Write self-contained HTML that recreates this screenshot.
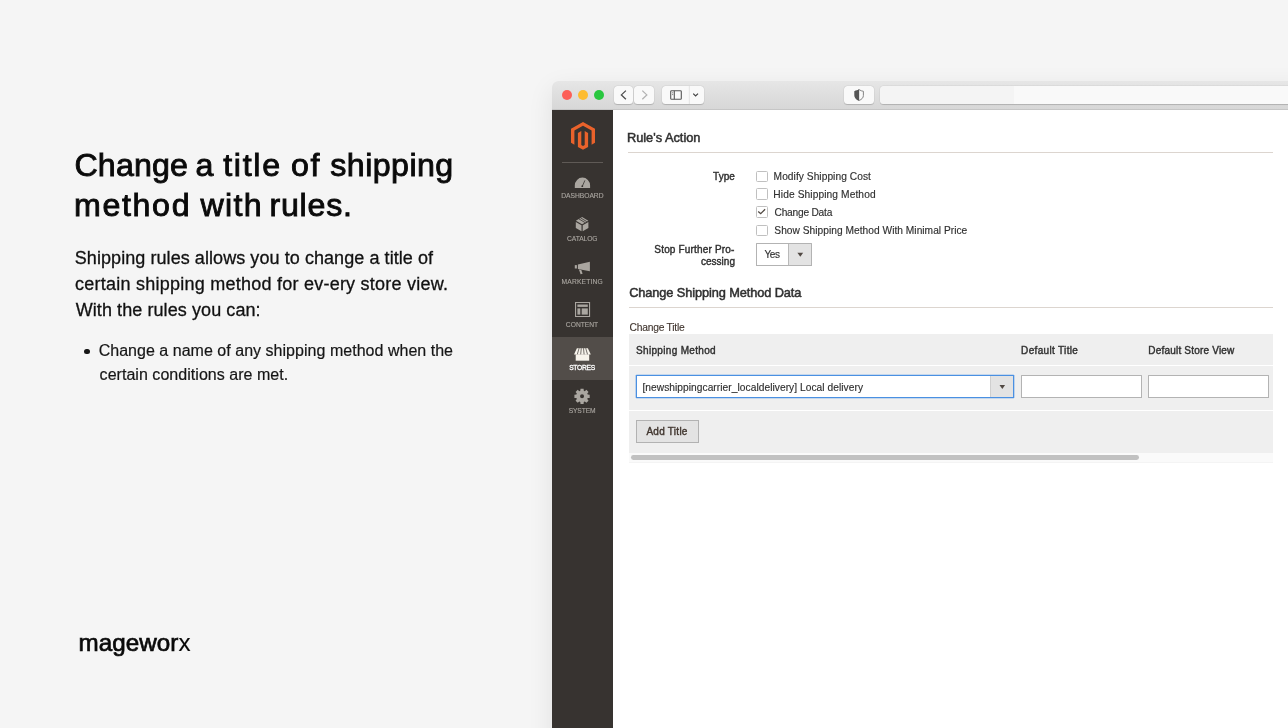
<!DOCTYPE html>
<html lang="en">
<head>
<meta charset="utf-8">
<title>Change a title of shipping method with rules</title>
<style>
*{box-sizing:border-box;margin:0;padding:0}
html,body{width:1288px;height:728px;overflow:hidden;background:#f5f5f5}
body{position:relative;font-family:"Liberation Sans",Arial,sans-serif;color:#111}
.t{position:absolute;white-space:pre;font-weight:400;font-family:"Liberation Sans",Arial,sans-serif}
.a{position:absolute}
.stage{position:absolute;left:0;top:0;width:1288px;height:728px;overflow:hidden;will-change:transform}
.dot{position:absolute;left:84.4px;top:348.5px;width:5.6px;height:5.6px;border-radius:50%;background:#161616}
/* browser window */
.win{position:absolute;left:552px;top:81px;width:760px;height:680px;border-radius:6px 0 0 0;background:#fff;box-shadow:0 8px 26px rgba(0,0,0,.085)}
.clip{position:absolute;left:0;top:0;width:100%;height:100%;border-radius:6px 0 0 0;overflow:hidden}
.tbar{position:absolute;left:0;top:0;width:100%;height:29px;background:linear-gradient(#e6e6e6,#d7d7d7);border-bottom:1px solid #c6c6c6}
.tl{position:absolute;top:9px;width:10px;height:10px;border-radius:50%}
.btn{position:absolute;top:5px;height:18.2px;background:#f9f9f9;border-radius:3.5px;box-shadow:0 .5px .8px rgba(0,0,0,.16),0 0 0 .5px rgba(0,0,0,.05)}
.side{position:absolute;left:0;top:29px;width:61px;height:700px;background:#373330}
.act{position:absolute;left:0;top:227px;width:61px;height:43px;background:#524d49}
.main{position:absolute;left:61px;top:29px;right:0;bottom:0;background:#fff}
.hr{position:absolute;height:1px;background:#dcd5cf}
.cb{position:absolute;width:11.5px;height:11.5px;border:1px solid #c0c0c0;border-radius:1.5px;background:#fff}
.inp{position:absolute;height:23px;border:1px solid #b3b3b3;background:#fff;border-radius:.5px}
</style>
</head>
<body>
<div class="stage">
<h1><span class="t" style="left:74.5px;top:149.0px;font-size:32.2px;line-height:32.2px;color:#0a0a0a;letter-spacing:0.12px;-webkit-text-stroke:0.9px #0a0a0a;">Change</span> <span class="t" style="left:195.6px;top:149.0px;font-size:32.2px;line-height:32.2px;color:#0a0a0a;-webkit-text-stroke:0.9px #0a0a0a;">a</span> <span class="t" style="left:223.2px;top:149.0px;font-size:32.2px;line-height:32.2px;color:#0a0a0a;letter-spacing:1.7px;-webkit-text-stroke:0.9px #0a0a0a;">title</span> <span class="t" style="left:290.9px;top:149.0px;font-size:32.2px;line-height:32.2px;color:#0a0a0a;letter-spacing:1.7px;-webkit-text-stroke:0.9px #0a0a0a;">of</span> <span class="t" style="left:330.3px;top:149.0px;font-size:32.2px;line-height:32.2px;color:#0a0a0a;letter-spacing:0.429px;-webkit-text-stroke:0.9px #0a0a0a;">shipping</span> <span class="t" style="left:74.0px;top:189.0px;font-size:32.2px;line-height:32.2px;color:#0a0a0a;letter-spacing:1.64px;-webkit-text-stroke:0.9px #0a0a0a;">method</span> <span class="t" style="left:200.5px;top:189.0px;font-size:32.2px;line-height:32.2px;color:#0a0a0a;letter-spacing:1.267px;-webkit-text-stroke:0.9px #0a0a0a;">with</span> <span class="t" style="left:269.45px;top:189.0px;font-size:32.2px;line-height:32.2px;color:#0a0a0a;letter-spacing:0.76px;-webkit-text-stroke:0.9px #0a0a0a;">rules.</span></h1>
<p><span class="t" style="left:74.75px;top:249.0px;font-size:18px;line-height:18px;color:#111;letter-spacing:0.069px;-webkit-text-stroke:0.3px #111;">Shipping rules allows you to change a title of</span> <span class="t" style="left:74.95px;top:275.0px;font-size:18px;line-height:18px;color:#111;letter-spacing:0.244px;-webkit-text-stroke:0.3px #111;">certain shipping method for ev-ery store view.</span> <span class="t" style="left:75.65px;top:301.0px;font-size:18px;line-height:18px;color:#111;letter-spacing:0.086px;-webkit-text-stroke:0.3px #111;">With the rules you can:</span></p>
<ul style="list-style:none"><li><span class="dot"></span><span class="t" style="left:98.7px;top:343.0px;font-size:16px;line-height:16px;color:#161616;letter-spacing:0.027px;-webkit-text-stroke:0.2px #161616;">Change a name of any shipping method when the</span> <span class="t" style="left:99.6px;top:367.0px;font-size:16px;line-height:16px;color:#161616;letter-spacing:0.038px;-webkit-text-stroke:0.2px #161616;">certain conditions are met.</span></li></ul>
<div class="t" style="left:78.4px;top:631.0px;font-size:24.2px;line-height:24.2px;color:#0a0a0a;letter-spacing:0.086px;-webkit-text-stroke:0.7px #0a0a0a;">magewor<span style="-webkit-text-stroke:0.1px #0a0a0a">x</span></div>

<div class="win"><div class="clip">
  <div class="tbar">
    <span class="tl" style="left:10px;background:#fc5f58"></span>
    <span class="tl" style="left:26px;background:#fdbc30"></span>
    <span class="tl" style="left:42px;background:#29c73f"></span>
    <span class="btn" style="left:62px;width:19.3px"></span>
    <span class="btn" style="left:82.2px;width:19.8px"></span>
    <span class="btn" style="left:110px;width:42px"></span>
    <span class="btn" style="left:291.7px;width:30.5px"></span>
    <span class="btn" style="left:328px;width:440px;background:linear-gradient(to right,#f4f4f4 0,#f4f4f4 134px,#f9f9f9 134px)"></span>
    <svg class="a" style="left:0;top:0" width="340" height="29" viewBox="0 0 340 29" fill="none">
      <path d="M73.900 9.600 L69.400 13.900 L73.900 18.200" stroke="#4d4d4d" stroke-width="1.300"/>
      <path d="M90.300 9.600 L94.800 13.900 L90.300 18.200" stroke="#b2b2b2" stroke-width="1.300"/>
      <rect x="118.700" y="9.700" width="10.600" height="8.600" rx=".9" stroke="#555" stroke-width="1.100"/>
      <path d="M122.300 9.700 V18.300" stroke="#555" stroke-width="1.100"/>
      <path d="M120 11.800h1.200M120 13.600h1.200" stroke="#555" stroke-width=".7"/>
      <path d="M137.300 5V23" stroke="#e3e3e3" stroke-width="1"/>
      <path d="M141.200 12.600 L143.600 14.900 L146 12.600" stroke="#444" stroke-width="1.300"/>
      <path d="M307.150 8.700 C305.600 9.700 304.200 10.100 302.900 10.300 V14.400 C302.900 16.800 304.600 18.500 307.150 19.400 C309.700 18.500 311.400 16.800 311.400 14.400 V10.300 C310.100 10.100 308.700 9.700 307.150 8.700z" stroke="#777" stroke-width=".9"/>
      <path d="M307.150 8.300 C305.500 9.400 304 9.800 302.500 10 V14.400 C302.500 17 304.400 18.800 307.150 19.800z" fill="#555"/>
    </svg>
  </div>
  <div class="side">
    <svg class="a" style="left:19px;top:12px" width="24" height="27.8" viewBox="0 0 24 28.700" preserveAspectRatio="none">
      <path d="M12 0 L24 6.900 V21.500 L20.600 23.500 V8.900 L12 3.900 L3.400 8.900 V23.500 L0 21.500 V6.900z" fill="#e9622b"/>
      <path d="M13.700 23.700 L12 24.700 L10.300 23.700 V9.300 L6.900 11.300 V25.700 L12 28.700 L17.100 25.700 V11.300 L13.700 9.300z" fill="#e9622b"/>
    </svg>
    <div class="a" style="left:10px;top:52px;width:41px;height:1px;background:#5f5a56"></div>
    <div class="act"></div>
  </div>
  <div class="main"></div>
</div></div>

<svg class="a" style="left:552px;top:110px" width="61" height="330" viewBox="552 110 61 330">
  <g fill="#aaa6a0">
    <path d="M574.800 188.100 v-2.600 a7.650 7.900 0 0 1 15.300 0 v2.600z"/>
    <path d="M575.900 220.700 L582.100 217 L588.300 220.700 L582.100 224.300z"/>
    <path d="M575.800 221.900 L581.500 225.300 V231.300 L575.800 227.900z"/>
    <path d="M588.400 221.900 L582.700 225.300 V231.300 L588.400 227.900z"/>
    <rect x="574.800" y="265.100" width="2.100" height="3.400"/>
    <path d="M577.900 264.600 L589.900 261.700 V271.300 L577.900 269.100z"/>
    <path d="M578.900 269.400 L581.300 269.900 L582.600 273.800 L580.600 274.200z"/>
    <path d="M575 301.900 h15.100 v15.100 h-15.100z M576.100 303 v12.900 h12.900 v-12.900z" fill-rule="evenodd"/>
    <rect x="577.400" y="304.500" width="10.400" height="2.400"/>
    <rect x="577.400" y="308.400" width="2.900" height="6.200"/>
    <rect x="581.700" y="308.400" width="6.100" height="6.200"/>
    <path d="M580.31 390.71 L580.50 388.71 L583.60 388.71 L583.79 390.71 L584.80 391.13 L586.36 389.85 L588.55 392.04 L587.27 393.60 L587.69 394.61 L589.69 394.80 L589.69 397.90 L587.69 398.09 L587.27 399.10 L588.55 400.66 L586.36 402.85 L584.80 401.57 L583.79 401.99 L583.60 403.99 L580.50 403.99 L580.31 401.99 L579.30 401.57 L577.74 402.85 L575.55 400.66 L576.83 399.10 L576.41 398.09 L574.41 397.90 L574.41 394.80 L576.41 394.61 L576.83 393.60 L575.55 392.04 L577.74 389.85 L579.30 391.13z M580.05 396.35a2 2 0 1 0 4 0a2 2 0 1 0 -4 0z" fill-rule="evenodd"/>
  </g>
  <g stroke="#373330" stroke-width=".9" fill="none">
    <path d="M582.300 186.300 L584.900 180.400" stroke-width=".8"/><circle cx="582.300" cy="186.200" r=".9" fill="#373330" stroke="none"/>
    <path d="M578.900 218.900 L585.100 222.600 M580.600 217.900 L586.800 221.600" stroke-width=".8"/>
  </g>
  <g fill="#f7f3eb">
    <path d="M576.900 348.200 h11 l2.900 6.300 h-16.800z"/>
    <path d="M575.700 354.300 h13.500 v6.400 h-13.500z"/>
  </g>
  <g stroke="#524d49" stroke-width=".9" fill="none">
    <path d="M579.100 348.200 L577.300 354.300 M581.300 348.200 L580.700 354.300 M583.500 348.200 L584.100 354.300 M585.700 348.200 L587.500 354.300" stroke-width=".8"/>
  </g>
</svg>
<!-- sidebar labels -->
<nav><span class="t" style="left:561.15px;top:193.0px;font-size:6.7px;line-height:6.7px;color:#aaa6a0;-webkit-text-stroke:0.12px #aaa6a0;">DASHBOARD</span> <span class="t" style="left:567.0px;top:236.0px;font-size:6.7px;line-height:6.7px;color:#aaa6a0;letter-spacing:-0.067px;-webkit-text-stroke:0.12px #aaa6a0;">CATALOG</span> <span class="t" style="left:561.6px;top:279.0px;font-size:6.7px;line-height:6.7px;color:#aaa6a0;letter-spacing:0.175px;-webkit-text-stroke:0.12px #aaa6a0;">MARKETING</span> <span class="t" style="left:565.85px;top:322.0px;font-size:6.7px;line-height:6.7px;color:#aaa6a0;-webkit-text-stroke:0.12px #aaa6a0;">CONTENT</span> <span class="t" style="left:569.2px;top:365.0px;font-size:6.7px;line-height:6.7px;color:#ffffff;letter-spacing:-0.28px;-webkit-text-stroke:0.3px #ffffff;">STORES</span> <span class="t" style="left:568.7px;top:408.0px;font-size:6.7px;line-height:6.7px;color:#aaa6a0;letter-spacing:-0.12px;-webkit-text-stroke:0.12px #aaa6a0;">SYSTEM</span></nav>

<!-- main content -->
<h2 class="t" style="left:626.9px;top:132.0px;font-size:12.8px;line-height:12.8px;color:#303030;-webkit-text-stroke:0.5px #303030;">Rule's Action</h2>
<div class="hr" style="left:628px;top:152px;width:645px"></div>
<label class="t" style="left:713.1px;top:172.0px;font-size:10.0px;line-height:10.0px;color:#303030;-webkit-text-stroke:0.4px #303030;">Type</label>
<span class="cb" style="left:756.2px;top:171px;height:11px"></span>
<span class="cb" style="left:756.2px;top:188.2px"></span>
<span class="cb" style="left:756.2px;top:206.3px"></span>
<span class="cb" style="left:756.2px;top:224.6px"></span>
<svg class="a" style="left:756px;top:206px" width="12" height="12" viewBox="756 206 12 12" fill="none"><path d="M758.200 211.500 L760.700 213.700 L765.100 209.200" stroke="#514943" stroke-width="1.300"/></svg>
<label class="t" style="left:773.6px;top:172.0px;font-size:10.2px;line-height:10.2px;color:#303030;letter-spacing:0.053px;-webkit-text-stroke:0.15px #303030;">Modify Shipping Cost</label> <label class="t" style="left:773.35px;top:190.0px;font-size:10.2px;line-height:10.2px;color:#303030;letter-spacing:0.105px;-webkit-text-stroke:0.15px #303030;">Hide Shipping Method</label> <label class="t" style="left:774.5px;top:208.0px;font-size:10.2px;line-height:10.2px;color:#303030;letter-spacing:-0.22px;-webkit-text-stroke:0.15px #303030;">Change Data</label> <label class="t" style="left:774.35px;top:226.0px;font-size:10.2px;line-height:10.2px;color:#303030;letter-spacing:0.026px;-webkit-text-stroke:0.15px #303030;">Show Shipping Method With Minimal Price</label>
<label class="t" style="left:654.35px;top:245.0px;font-size:10.0px;line-height:10.0px;color:#303030;letter-spacing:0.169px;-webkit-text-stroke:0.4px #303030;">Stop Further Pro-</label><label class="t" style="left:701.05px;top:257.0px;font-size:10.0px;line-height:10.0px;color:#303030;-webkit-text-stroke:0.4px #303030;">cessing</label>
<div class="inp" style="left:756.2px;top:243px;width:56px;height:22.500px"></div>
<div class="a" style="left:788px;top:244px;width:23.200px;height:20.500px;background:#e3e3e3;border-left:1px solid #b9b9b9"></div>
<svg class="a" style="left:796px;top:251px" width="9" height="8" viewBox="796 251 9 8"><path d="M797.400 252.800 H803.200 L800.300 256.700z" fill="#514943"/></svg>
<span class="t" style="left:764.45px;top:250.0px;font-size:10px;line-height:10px;color:#303030;letter-spacing:-0.4px;-webkit-text-stroke:0.15px #303030;">Yes</span>
<h2 class="t" style="left:629.2px;top:287.0px;font-size:12.8px;line-height:12.8px;color:#303030;letter-spacing:-0.108px;-webkit-text-stroke:0.5px #303030;">Change Shipping Method Data</h2>
<div class="hr" style="left:629px;top:307px;width:644px"></div>
<span class="t" style="left:629.5px;top:323.0px;font-size:10.3px;line-height:10.3px;color:#41362f;letter-spacing:-0.236px;-webkit-text-stroke:0.12px #41362f;">Change Title</span>
<div class="a" style="left:629px;top:334px;width:644px;height:119px;background:#efefef"></div>
<div class="a" style="left:629px;top:365px;width:644px;height:1px;background:#fff"></div>
<div class="a" style="left:629px;top:410px;width:644px;height:1px;background:#fff"></div>
<span class="t" style="left:636.0px;top:346.0px;font-size:10.0px;line-height:10.0px;color:#303030;letter-spacing:0.329px;-webkit-text-stroke:0.4px #303030;">Shipping Method</span> <span class="t" style="left:1021.1px;top:346.0px;font-size:10.0px;line-height:10.0px;color:#303030;letter-spacing:0.333px;-webkit-text-stroke:0.4px #303030;">Default Title</span> <span class="t" style="left:1148.35px;top:346.0px;font-size:10.0px;line-height:10.0px;color:#303030;letter-spacing:0.194px;-webkit-text-stroke:0.4px #303030;">Default Store View</span>
<div class="inp" style="left:636px;top:375px;width:378px;border-color:#4a90e2;box-shadow:0 0 0 .3px #4a90e2"></div>
<div class="a" style="left:990px;top:376px;width:23px;height:21px;background:#e3e3e3;border-left:1px solid #cfcfcf"></div>
<svg class="a" style="left:998px;top:383px" width="9" height="8" viewBox="998 383 9 8"><path d="M999.500 384.900 H1005.100 L1002.300 388.900z" fill="#514943"/></svg>
<span class="t" style="left:642.4px;top:383.0px;font-size:10.2px;line-height:10.2px;color:#303030;letter-spacing:0.054px;-webkit-text-stroke:0.15px #303030;">[newshippingcarrier_localdelivery] Local delivery</span>
<div class="inp" style="left:1021px;top:375px;width:120.500px"></div>
<div class="inp" style="left:1148px;top:375px;width:120.500px"></div>
<div class="a" style="left:636px;top:420px;width:62.500px;height:23px;background:#e3e3e3;border:1px solid #b2b2b2"></div>
<span class="t" style="left:646.42px;top:427.0px;font-size:10.0px;line-height:10.0px;color:#41362f;letter-spacing:0.263px;-webkit-text-stroke:0.4px #41362f;">Add Title</span>
<div class="a" style="left:629px;top:453px;width:644px;height:9.500px;background:#fafafa;border-bottom:1px solid #f4f4f4"></div>
<div class="a" style="left:631px;top:455px;width:508px;height:4.800px;border-radius:2.400px;background:#c1c1c1"></div>
</div>
</body>
</html>
